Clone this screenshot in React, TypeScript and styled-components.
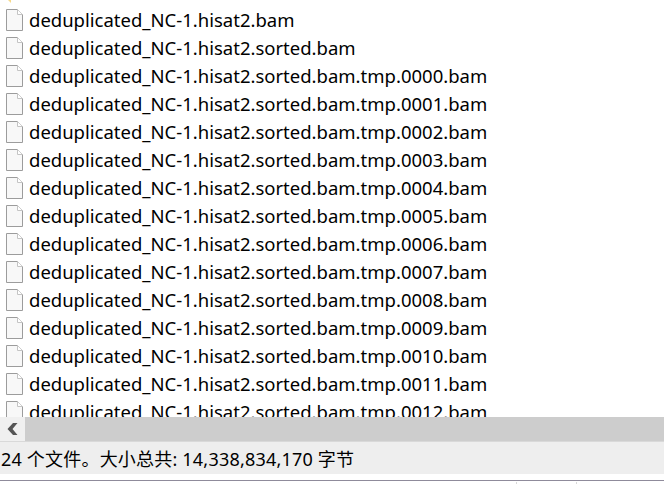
import styled, { createGlobalStyle } from "styled-components";

const GlobalStyle = createGlobalStyle`
  html, body {
    margin: 0;
    padding: 0;
    background: #ffffff;
  }
`;

const Window = styled.div`
  width: 664px;
  height: 484px;
  display: flex;
  flex-direction: column;
  overflow: hidden;
  background: #ffffff;
  font-family: "Noto Sans", "Noto Sans CJK SC", sans-serif;
  color: #000000;
`;

const FileList = styled.div`
  position: relative;
  height: 417px;
  flex: none;
  overflow: hidden;
  padding: 6px 0 0 6px;
  box-sizing: border-box;
`;

const FolderCorner = styled.div`
  position: absolute;
  top: 0;
  left: 8px;
  width: 3px;
  height: 3px;
  background: #f6d98a;
  clip-path: polygon(0 0, 100% 0, 100% 100%);
`;

const FileRow = styled.div`
  height: 28px;
  display: flex;
  align-items: center;
  gap: 6px;
  font-size: 18.5px;
  white-space: nowrap;
`;

const FileName = styled.span`
  padding-bottom: 2px;
`;

const Scrollbar = styled.div`
  height: 24px;
  flex: none;
  display: flex;
  background: #cdcdcd;
`;

const ScrollButton = styled.div`
  width: 25px;
  display: flex;
  align-items: center;
  justify-content: center;
  background: #f0f0f0;
`;

const StatusBar = styled.div`
  height: 33px;
  flex: none;
  box-sizing: border-box;
  padding-left: 1px;
  display: flex;
  align-items: center;
  background: #eeeeee;
  border-top: 1px solid #d9d9d9;
  font-size: 18px;
  letter-spacing: 0.2px;
`;

const StatusGap = styled.div`
  height: 7px;
  flex: none;
  box-sizing: border-box;
  background: #ffffff;
  border-bottom: 1px solid #8f8b9b;
`;

const BottomEdge = styled.div`
  flex: 1;
  position: relative;
  background: #ffffff;
`;

const Tick = styled.div<{ $left: number }>`
  position: absolute;
  top: 1px;
  left: ${(p) => p.$left}px;
  width: 1px;
  height: 2px;
  background: #d9d9d9;
`;

const names = [
  "deduplicated_NC-1.hisat2.bam",
  "deduplicated_NC-1.hisat2.sorted.bam",
  ...Array.from({ length: 13 }, (_, i) =>
    `deduplicated_NC-1.hisat2.sorted.bam.tmp.${String(i).padStart(4, "0")}.bam`
  ),
];

function FileIcon() {
  return (
    <svg width="17" height="22" viewBox="0 0 17 22">
      <path d="M0.5 0.5H11.5L16.5 5.5V21.5H0.5Z" fill="#f8f8f8" stroke="#9c9c9c" />
      <path d="M11.5 0.5V5.5H16.5" fill="#ffffff" stroke="#c4c4c4" />
    </svg>
  );
}

function App() {
  return (
    <>
      <GlobalStyle />
      <Window>
        <FileList>
          <FolderCorner />
          {names.map((name) => (
            <FileRow key={name}>
              <FileIcon />
              <FileName>{name}</FileName>
            </FileRow>
          ))}
        </FileList>
        <Scrollbar>
          <ScrollButton>
            <svg width="12" height="14" viewBox="0 0 12 14">
              <path d="M0.5 7L6 1H10.5L5.5 7L10.5 13H6Z" fill="#555555" />
            </svg>
          </ScrollButton>
        </Scrollbar>
        <StatusBar>24 个文件。大小总共: 14,338,834,170 字节</StatusBar>
        <StatusGap />
        <BottomEdge>
          <Tick $left={516} />
          <Tick $left={576} />
        </BottomEdge>
      </Window>
    </>
  );
}

export default App;
